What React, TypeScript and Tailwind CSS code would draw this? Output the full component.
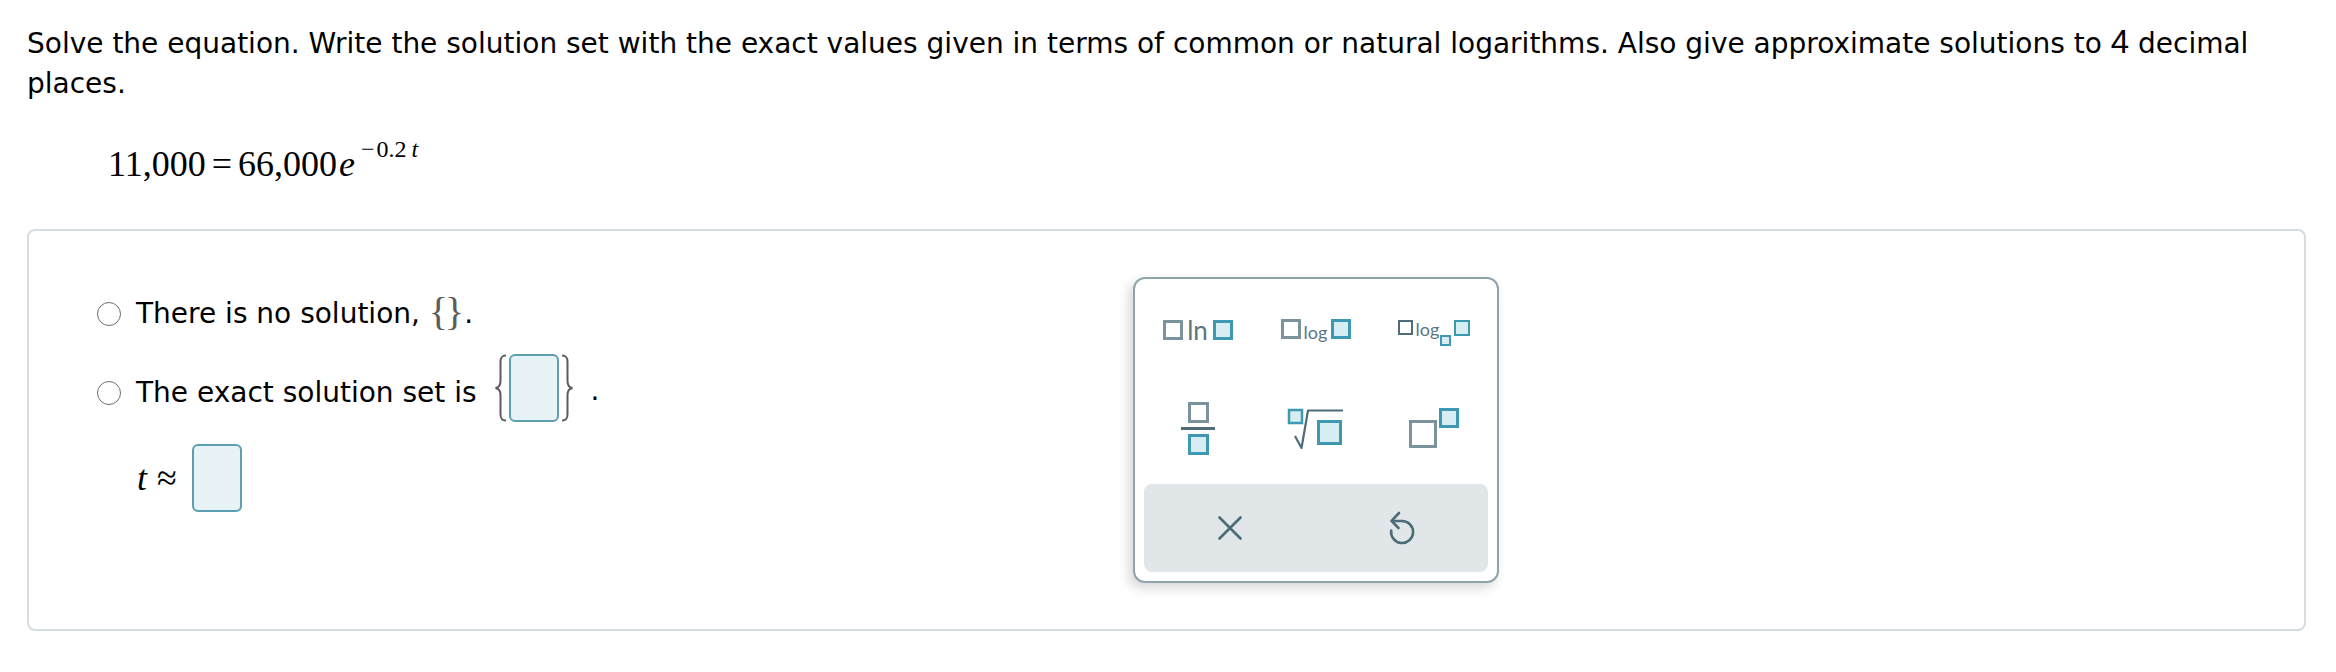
import type { ReactNode } from "react";

/* Exponential-equation question card with a math keypad on the right. */

function Radio() {
  return (
    <span className="inline-block w-[24px] h-[24px] shrink-0 rounded-full border-[1.5px] border-[#6e6e6e] bg-white" />
  );
}

function AnswerBox() {
  return (
    <span className="inline-block w-[50px] h-[68px] shrink-0 rounded-[6px] border-2 border-[#5d9fb2] bg-[#e7f3f6]" />
  );
}

function LeftBrace() {
  return (
    <svg width="15" height="68" viewBox="0 0 15 68" className="shrink-0">
      <path
        d="M12 1.5 C7.5 1.5 6.5 3.5 6.5 8 L6.5 27 C6.5 31.5 4.5 33.5 1.5 34 C4.5 34.5 6.5 36.5 6.5 41 L6.5 60 C6.5 64.5 7.5 66.5 12 66.5"
        fill="none"
        stroke="#5c5c5c"
        strokeWidth="2"
      />
    </svg>
  );
}

function RightBrace() {
  return (
    <svg width="15" height="68" viewBox="0 0 15 68" className="shrink-0">
      <path
        d="M3 1.5 C7.5 1.5 8.5 3.5 8.5 8 L8.5 27 C8.5 31.5 10.5 33.5 13.5 34 C10.5 34.5 8.5 36.5 8.5 41 L8.5 60 C8.5 64.5 7.5 66.5 3 66.5"
        fill="none"
        stroke="#5c5c5c"
        strokeWidth="2"
      />
    </svg>
  );
}

/* keypad glyph pieces */
function GraySq({ size = "w-[20px] h-[20px]" }: { size?: string }) {
  return <span className={`inline-block shrink-0 border-[3px] border-[#7b939c] bg-white ${size}`} />;
}

function TealSq({ size = "w-[20px] h-[20px]" }: { size?: string }) {
  return <span className={`inline-block shrink-0 border-[3px] border-[#3e98b1] bg-[#d5edf3] ${size}`} />;
}

function Key({ children }: { children: ReactNode }) {
  return (
    <button type="button" className="flex items-center justify-center h-[98px]">
      {children}
    </button>
  );
}

function LnIcon() {
  return (
    <span className="inline-flex items-baseline">
      <GraySq />
      <span className="ml-[4px] mr-[5px] font-['Lato',sans-serif] text-[26px] leading-none text-[#5a7783]">ln</span>
      <TealSq />
    </span>
  );
}

function LogIcon() {
  return (
    <span className="inline-flex items-baseline">
      <GraySq />
      <span className="ml-[3px] mr-[4px] font-['Lato',sans-serif] text-[18px] leading-none text-[#5a7783]">log</span>
      <TealSq />
    </span>
  );
}

function LogBaseIcon() {
  return (
    <span className="inline-flex items-start mt-[6px]">
      <span className="inline-block w-[15px] h-[15px] border-2 border-[#4f6d79] bg-white" />
      <span className="ml-[3px] font-['Lato',sans-serif] text-[18px] leading-[18px] text-[#5a7783]">log</span>
      <span className="inline-block mt-[15px] ml-[1px] w-[11px] h-[11px] border-2 border-[#3e98b1] bg-[#d5edf3]" />
      <span className="inline-block ml-[3px] w-[16px] h-[16px] border-[2.5px] border-[#3e98b1] bg-[#d5edf3]" />
    </span>
  );
}

function FractionIcon() {
  return (
    <span className="flex flex-col items-center">
      <GraySq size="w-[21px] h-[21px]" />
      <span className="block my-[4px] w-[34px] h-[3px] bg-[#4f6d79]" />
      <TealSq size="w-[21px] h-[21px]" />
    </span>
  );
}

function SqrtIcon() {
  return (
    <svg width="58" height="42" viewBox="0 0 58 42">
      <rect x="2" y="3" width="13" height="13" fill="#d5edf3" stroke="#3e98b1" strokeWidth="2.5" />
      <path d="M8 29 L14.5 41 L21 3.5 L56 3.5" fill="none" stroke="#4f6d79" strokeWidth="2.2" strokeLinejoin="round" />
      <rect x="31.5" y="14.5" width="22" height="22" fill="#d5edf3" stroke="#3e98b1" strokeWidth="3" />
    </svg>
  );
}

function PowerIcon() {
  return (
    <span className="inline-flex items-start">
      <GraySq size="w-[28px] h-[28px] mt-[12px]" />
      <TealSq size="w-[20px] h-[20px] ml-[2px]" />
    </span>
  );
}

function ClearIcon() {
  return (
    <svg width="24" height="24" viewBox="0 0 24 24">
      <path d="M1.5 1.5 L22.5 22.5 M22.5 1.5 L1.5 22.5" stroke="#4b6b77" strokeWidth="2.6" strokeLinecap="round" />
    </svg>
  );
}

function UndoIcon() {
  return (
    <svg width="30" height="36" viewBox="0 0 30 36">
      <path
        d="M15 11 A11 11 0 1 1 4.2 20.5"
        fill="none"
        stroke="#4b6b77"
        strokeWidth="2.6"
        strokeLinecap="round"
      />
      <path d="M15 11 H5 M12 3 L4.5 10.8 L11.5 18" fill="none" stroke="#4b6b77" strokeWidth="2.6" strokeLinecap="round" strokeLinejoin="round" />
    </svg>
  );
}

function Keypad() {
  return (
    <div className="w-[366px] h-[306px] shrink-0 flex flex-col rounded-[12px] border-2 border-[#8ea3ac] bg-white px-[9px] pt-[2px] pb-[9px] shadow-[-4px_5px_12px_rgba(0,0,0,0.16)]">
      <div className="grid grid-cols-[108px_128px_108px]">
        <Key>
          <LnIcon />
        </Key>
        <Key>
          <LogIcon />
        </Key>
        <Key>
          <LogBaseIcon />
        </Key>
        <Key>
          <FractionIcon />
        </Key>
        <Key>
          <SqrtIcon />
        </Key>
        <Key>
          <PowerIcon />
        </Key>
      </div>
      <div className="mt-[7px] flex h-[88px] rounded-[8px] bg-[#e1e6e9]">
        <button type="button" className="flex flex-1 items-center justify-center">
          <ClearIcon />
        </button>
        <button type="button" className="flex flex-1 items-center justify-center">
          <UndoIcon />
        </button>
      </div>
    </div>
  );
}

export default function App() {
  return (
    <div className="w-[2336px] h-[672px] bg-white text-black font-['DejaVu_Sans',Verdana,sans-serif]">
      <div className="pl-[27px] pr-[30px] pt-[24px]">
        <p className="text-[28px] leading-[40px]">
          Solve the equation. Write the solution set with the exact values given in terms of common or natural
          logarithms. Also give approximate solutions to{" "}
          <span className="font-['Liberation_Sans',Arial,sans-serif] text-[33px] leading-none">4</span> decimal
          places.
        </p>

        <div className="mt-[36px] ml-[81px] h-[48px] font-['Liberation_Serif','Times_New_Roman',serif] text-[36px] leading-[48px] whitespace-nowrap">
          <span>11,000</span>
          <span className="mx-[6px]">=</span>
          <span>66,000</span>
          <span className="italic ml-[2px]">e</span>
          <span className="relative -top-[19px] ml-[6px] text-[24px]">
            −<span className="ml-[2px]">0.2</span>
            <span className="italic ml-[5px]">t</span>
          </span>
        </div>

        <div className="mt-[41px] h-[402px] flex rounded-[8px] border-2 border-[#d5dde1] bg-white pl-[68px] pt-[46px]">
          <div className="w-[1036px] shrink-0 flex flex-col">
            <div className="mt-[17px] flex h-[40px] items-center text-[28px] leading-[40px]">
              <Radio />
              <span className="ml-[15px] whitespace-pre">There is no solution, </span>
              <span className="font-['Liberation_Serif',serif] text-[40px] leading-none text-[#5c5c5c] tracking-[-3px] -translate-y-[2px]">
                {"{}"}
              </span>
              <span className="ml-[3px]">.</span>
            </div>

            <div className="mt-[20px] flex h-[68px] items-center text-[28px] leading-[40px]">
              <span className="mt-[10px] flex items-center">
                <Radio />
                <span className="ml-[15px]">The exact solution set is</span>
              </span>
              <span className="ml-[17px] flex items-center">
                <LeftBrace />
                <AnswerBox />
                <RightBrace />
              </span>
              <span className="ml-[17px] mt-[6px]">.</span>
            </div>

            <div className="mt-[22px] ml-[40px] flex h-[68px] items-center font-['Liberation_Serif',serif] text-[36px]">
              <span className="italic">t</span>
              <span className="ml-[10px]">≈</span>
              <span className="ml-[15px] flex">
                <AnswerBox />
              </span>
            </div>
          </div>
          <Keypad />
        </div>
      </div>
    </div>
  );
}
